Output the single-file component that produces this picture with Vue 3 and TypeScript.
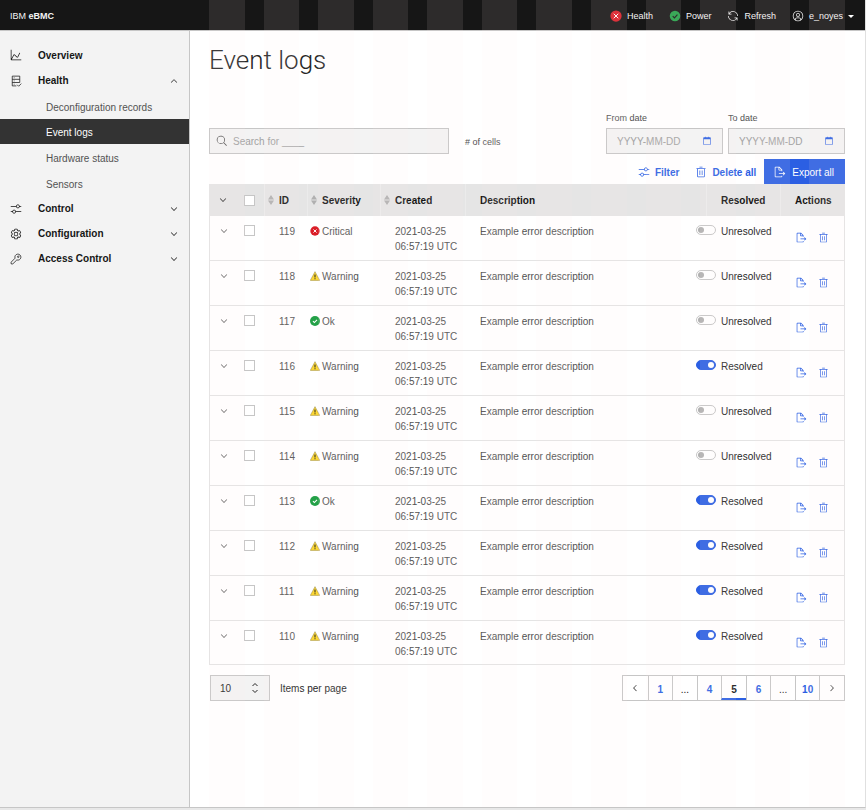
<script setup lang="ts">
import { ref } from 'vue'

type Severity = 'Critical' | 'Warning' | 'Ok'

interface LogEntry {
  id: number
  severity: Severity
  date: string
  time: string
  description: string
  resolved: boolean
  selected: boolean
}

const icons = {
  overview:
    'M4.67 28l6.39-12 7.3 6.49a2 2 0 001.7.47 2 2 0 001.42-1.07L27 10.9l-1.82-.9-5.49 11-7.3-6.49a2 2 0 00-1.68-.51 2 2 0 00-1.42 1L4 25V2H2v26a2 2 0 002 2h26v-2z',
  down: 'M16 22L6 12l1.4-1.4 8.6 8.6 8.6-8.6L26 12z',
  up: 'M16 10l10 10-1.4 1.4-8.6-8.6-8.6 8.6L6 20z',
  left: 'M10 16L20 6l1.4 1.4-8.6 8.6 8.6 8.6L20 26z',
  right: 'M22 16L12 26l-1.4-1.4 8.6-8.6-8.6-8.6L12 6z',
  search:
    'M29 27.59l-7.55-7.56a11.02 11.02 0 10-1.42 1.42L27.59 29zM4 13a9 9 0 119 9 9.01 9.01 0 01-9-9z',
  adjust:
    'M30 8h-4.1c-.5-2.3-2.5-4-4.9-4s-4.4 1.7-4.9 4H2v2h14.1c.5 2.3 2.5 4 4.9 4s4.4-1.7 4.9-4H30V8zM21 12c-1.7 0-3-1.3-3-3s1.3-3 3-3 3 1.3 3 3-1.3 3-3 3zM2 24h4.1c.5 2.3 2.5 4 4.9 4s4.4-1.7 4.9-4H30v-2H15.9c-.5-2.3-2.5-4-4.9-4s-4.4 1.7-4.9 4H2v2zM11 20c1.7 0 3 1.3 3 3s-1.3 3-3 3-3-1.3-3-3 1.3-3 3-3z',
  trash:
    'M12 12h2v12h-2zM18 12h2v12h-2zM4 6v2h2v20a2 2 0 002 2h16a2 2 0 002-2V8h2V6zM8 28V8h16v20zM12 2h8v2h-8z',
  export:
    'M13 21h13.17l-2.58 2.59L25 25l5-5-5-5-1.41 1.41L26.17 19H13zM22 14v-4a1 1 0 00-.29-.71l-7-7A1 1 0 0014 2H4a2 2 0 00-2 2v24a2 2 0 002 2h16a2 2 0 002-2v-2h-2v2H4V4h8v6a2 2 0 002 2h6v2zM14 10V4.41L19.59 10z',
  calendar:
    'M26 4h-4V2h-2v2h-8V2h-2v2H6c-1.1 0-2 .9-2 2v20c0 1.1.9 2 2 2h20c1.1 0 2-.9 2-2V6c0-1.1-.9-2-2-2zm0 22H6V10h20v16z',
  renew:
    'M12 10H6.78A11 11 0 0127 16h2A13 13 0 006 7.68V4H4v8h8zM20 22h5.22A11 11 0 015 16H3a13 13 0 0023 8.32V28h2v-8h-8z',
  user: 'M16 8a5 5 0 105 5 5 5 0 00-5-5zm0 8a3 3 0 113-3 3 3 0 01-3 3zM16 2a14 14 0 1014 14A14.016 14.016 0 0016 2zM10 26.377V25a3.003 3.003 0 013-3h6a3.003 3.003 0 013 3v1.377a11.899 11.899 0 01-12 0zm13.993-1.451A5.002 5.002 0 0019 20h-6a5.002 5.002 0 00-4.992 4.926 12 12 0 1115.985 0z',
  settings:
    'M27 16.76c0-.25 0-.5 0-.76s0-.51 0-.77l1.92-1.68A2 2 0 0029.3 11l-2.36-4a2 2 0 00-1.73-1 2 2 0 00-.64.1l-2.43.82a11.35 11.35 0 00-1.31-.75l-.51-2.52a2 2 0 00-2-1.61h-4.68a2 2 0 00-2 1.61l-.51 2.52a11.48 11.48 0 00-1.32.75L7.43 6.06A2 2 0 006.79 6a2 2 0 00-1.73 1L2.7 11a2 2 0 00.41 2.51L5 15.24c0 .25 0 .5 0 .76s0 .51 0 .77l-1.92 1.68A2 2 0 002.7 21l2.36 4a2 2 0 001.73 1 2 2 0 00.64-.1l2.43-.82a11.35 11.35 0 001.31.75l.51 2.52a2 2 0 002 1.61h4.72a2 2 0 002-1.61l.51-2.52a11.48 11.48 0 001.32-.75l2.42.82a2 2 0 00.64.1 2 2 0 001.73-1l2.28-4a2 2 0 00-.41-2.51zM25.21 24l-3.43-1.16a8.86 8.86 0 01-2.71 1.57L18.36 28h-4.72l-.71-3.55a9.36 9.36 0 01-2.7-1.57L6.79 24l-2.36-4 2.72-2.4a8.9 8.9 0 010-3.13L4.43 12l2.36-4 3.43 1.16a8.86 8.86 0 012.71-1.57L13.64 4h4.72l.71 3.55a9.36 9.36 0 012.7 1.57L25.21 8l2.36 4-2.72 2.4a8.9 8.9 0 010 3.13L27.57 20zM16 22a6 6 0 116-6 5.94 5.94 0 01-6 6zm0-10a3.91 3.91 0 00-4 4 3.91 3.91 0 004 4 3.91 3.91 0 004-4 3.91 3.91 0 00-4-4z',
}

const healthLinks = ['Deconfiguration records', 'Event logs', 'Hardware status', 'Sensors']
const currentLink = 'Event logs'

const makeEntry = (id: number, severity: Severity, resolved: boolean): LogEntry => ({
  id,
  severity,
  date: '2021-03-25',
  time: '06:57:19 UTC',
  description: 'Example error description',
  resolved,
  selected: false,
})

const logs = ref<LogEntry[]>([
  makeEntry(119, 'Critical', false),
  makeEntry(118, 'Warning', false),
  makeEntry(117, 'Ok', false),
  makeEntry(116, 'Warning', true),
  makeEntry(115, 'Warning', false),
  makeEntry(114, 'Warning', false),
  makeEntry(113, 'Ok', true),
  makeEntry(112, 'Warning', true),
  makeEntry(111, 'Warning', true),
  makeEntry(110, 'Warning', true),
])

const sortable = ['ID', 'Severity', 'Created']
const pages = ['1', '…', '4', '5', '6', '…', '10']
const currentPage = ref('5')
const pageSize = ref('10')
</script>

<template>
  <div class="page">
    <header class="topbar">
      <a class="brand" href="#">IBM <b>eBMC</b></a>
      <nav class="topnav" aria-label="System">
        <a href="#">
          <svg viewBox="0 0 32 32"><circle cx="16" cy="16" r="15" fill="#da1e28" /><path d="M10 10l12 12M22 10L10 22" stroke="#fff" stroke-width="2.6" /></svg>
          Health
        </a>
        <a href="#">
          <svg viewBox="0 0 32 32"><circle cx="16" cy="16" r="14" fill="#24a148" /><path d="M10 16.500l4.500 4.500 8-8.500" fill="none" stroke="#161616" stroke-width="3" /></svg>
          Power
        </a>
        <button type="button">
          <svg viewBox="0 0 32 32"><path :d="icons.renew" /></svg>
          Refresh
        </button>
        <button type="button">
          <svg viewBox="0 0 32 32"><path :d="icons.user" /></svg>
          e_noyes
          <i class="caret"></i>
        </button>
      </nav>
    </header>

    <div class="body">
      <nav class="sidebar" aria-label="Main">
        <a class="group" href="#">
          <svg viewBox="0 0 32 32"><path :d="icons.overview" /></svg><span>Overview</span>
        </a>
        <button class="group" type="button" aria-expanded="true">
          <svg viewBox="0 0 32 32" fill="none" stroke="currentColor" stroke-width="2">
            <path d="M26 20V3H6v26h11M6 11.500h20M6 20h20" />
            <path d="M10 7.300h2M10 15.800h2M10 24.500h2" />
            <path d="M19 26l4 4 7-7" />
          </svg>
          <span>Health</span>
          <svg class="chevron" viewBox="0 0 32 32"><path :d="icons.up" /></svg>
        </button>
        <ul>
          <li v-for="link in healthLinks" :key="link">
            <a href="#" :class="{ active: link === currentLink }">{{ link }}</a>
          </li>
        </ul>
        <button class="group" type="button">
          <svg viewBox="0 0 32 32"><path :d="icons.adjust" /></svg><span>Control</span>
          <svg class="chevron" viewBox="0 0 32 32"><path :d="icons.down" /></svg>
        </button>
        <button class="group" type="button">
          <svg viewBox="0 0 32 32"><path :d="icons.settings" /></svg><span>Configuration</span>
          <svg class="chevron" viewBox="0 0 32 32"><path :d="icons.down" /></svg>
        </button>
        <button class="group" type="button">
          <svg viewBox="0 0 32 32" fill="none" stroke="currentColor" stroke-width="2">
            <path d="M13.500 13.800L3 24.500V29h4.500L18.200 18.500A8 8 0 1013.500 13.800z" />
            <circle cx="22" cy="10" r="2" />
          </svg>
          <span>Access Control</span>
          <svg class="chevron" viewBox="0 0 32 32"><path :d="icons.down" /></svg>
        </button>
      </nav>

      <main>
        <h1>Event logs</h1>

        <div class="filters">
          <div class="field search">
            <svg viewBox="0 0 32 32"><path :d="icons.search" /></svg>
            <input type="search" placeholder="Search for ____" aria-label="Search logs" />
          </div>
          <span class="count"># of cells</span>
          <div class="date">
            <label for="from-date">From date</label>
            <div class="field">
              <input id="from-date" type="text" placeholder="YYYY-MM-DD" />
              <button type="button" aria-label="Pick from date"><svg viewBox="0 0 32 32"><path :d="icons.calendar" /></svg></button>
            </div>
          </div>
          <div class="date">
            <label for="to-date">To date</label>
            <div class="field">
              <input id="to-date" type="text" placeholder="YYYY-MM-DD" />
              <button type="button" aria-label="Pick to date"><svg viewBox="0 0 32 32"><path :d="icons.calendar" /></svg></button>
            </div>
          </div>
        </div>

        <div class="toolbar">
          <button type="button"><svg viewBox="0 0 32 32"><path :d="icons.adjust" /></svg>Filter</button>
          <button type="button"><svg viewBox="0 0 32 32"><path :d="icons.trash" /></svg>Delete all</button>
          <button class="primary" type="button"><svg viewBox="0 0 32 32"><path :d="icons.export" /></svg>Export all</button>
        </div>

        <table>
          <colgroup>
            <col class="c-expand" /><col class="c-check" /><col class="c-id" /><col class="c-severity" />
            <col class="c-created" /><col /><col class="c-resolved" /><col class="c-actions" />
          </colgroup>
          <thead>
            <tr>
              <th class="center">
                <button type="button" aria-label="Expand all"><svg class="chevron" viewBox="0 0 32 32"><path :d="icons.down" /></svg></button>
              </th>
              <th class="center select"><input class="check" type="checkbox" aria-label="Select all" /></th>
              <th v-for="name in sortable" :key="name" class="divided">
                <button class="sort" type="button">
                  <svg viewBox="0 0 6 10"><path d="M3 0l3 4.400H0zM3 10L0 5.600h6z" /></svg>{{ name }}
                </button>
              </th>
              <th class="divided text">Description</th>
              <th class="resolved"><span>Resolved</span></th>
              <th class="divided text">Actions</th>
            </tr>
          </thead>
          <tbody>
            <tr v-for="log in logs" :key="log.id">
              <td class="center">
                <button type="button" :aria-label="`Expand ${log.id}`"><svg class="chevron" viewBox="0 0 32 32"><path :d="icons.down" /></svg></button>
              </td>
              <td class="center select"><input v-model="log.selected" class="check" type="checkbox" :aria-label="`Select ${log.id}`" /></td>
              <td class="text">{{ log.id }}</td>
              <td>
                <span class="severity">
                  <svg v-if="log.severity === 'Critical'" viewBox="0 0 32 32"><circle cx="16" cy="16" r="15" fill="#da1e28" /><path d="M11 11l10 10M21 11L11 21" stroke="#fff" stroke-width="3" /></svg>
                  <svg v-else-if="log.severity === 'Ok'" viewBox="0 0 32 32"><circle cx="16" cy="16" r="16" fill="#24a148" /><path d="M9.500 16.500l4.500 4.500 8.500-8.500" fill="none" stroke="#fff" stroke-width="3.500" /></svg>
                  <svg v-else viewBox="0 0 32 32"><path d="M16 2L31 30H1z" fill="#fdd835" stroke="#8a7a3a" stroke-width="1.500" stroke-linejoin="round" /><path d="M14.500 11h3v10h-3zM14.500 23.500h3v3h-3z" fill="#161616" /></svg>
                  {{ log.severity }}
                </span>
              </td>
              <td class="text">{{ log.date }}<br />{{ log.time }}</td>
              <td class="text">{{ log.description }}</td>
              <td>
                <label class="switch"><input v-model="log.resolved" type="checkbox" role="switch" />{{ log.resolved ? 'Resolved' : 'Unresolved' }}</label>
              </td>
              <td>
                <div class="actions">
                  <button type="button" :aria-label="`Export ${log.id}`"><svg viewBox="0 0 32 32"><path :d="icons.export" /></svg></button>
                  <button type="button" :aria-label="`Delete ${log.id}`"><svg viewBox="0 0 32 32"><path :d="icons.trash" /></svg></button>
                </div>
              </td>
            </tr>
          </tbody>
        </table>

        <footer>
          <div class="size">
            <select id="page-size" v-model="pageSize">
              <option>10</option>
              <option>20</option>
              <option>50</option>
            </select>
            <svg viewBox="0 0 10 12"><path d="M2.500 4l2.500-2.500L7.500 4M2.500 8l2.500 2.500L7.500 8" fill="none" stroke="currentColor" /></svg>
          </div>
          <label for="page-size">Items per page</label>
          <nav class="pager" aria-label="Pagination">
            <button type="button" aria-label="Previous page"><svg viewBox="0 0 32 32"><path :d="icons.left" /></svg></button>
            <template v-for="(page, i) in pages" :key="i">
              <span v-if="page === '…'">...</span>
              <button v-else type="button" :class="{ current: page === currentPage }" @click="currentPage = page">{{ page }}</button>
            </template>
            <button type="button" aria-label="Next page"><svg viewBox="0 0 32 32"><path :d="icons.right" /></svg></button>
          </nav>
        </footer>
      </main>
    </div>

    <div class="columns" aria-hidden="true"><i v-for="n in 12" :key="n"></i></div>
  </div>
</template>

<style>
body {
  background: #e8e8e8;
}
</style>

<style scoped>
.page,
.page * {
  box-sizing: border-box;
}
.page {
  position: relative;
  display: flex;
  flex-direction: column;
  min-height: calc(100vh - 2px);
  border-right: 1px solid #e0e0e0;
  border-bottom: 1px solid #c6c6c6;
  background: #fff;
  color: #525252;
  font: 10px/15px "Liberation Sans", Arial, sans-serif;
}
svg {
  flex: none;
  width: 12px;
  height: 12px;
  fill: currentColor;
  fill-rule: evenodd;
}
svg[fill='none'] {
  fill: none;
}
a {
  color: inherit;
  text-decoration: none;
}
button,
input,
select {
  margin: 0;
  padding: 0;
  border: 0;
  border-radius: 0;
  background: none;
  color: inherit;
  font: inherit;
  outline: none;
}
button svg {
  display: block;
}
.chevron {
  width: 10px;
  height: 10px;
}

.columns {
  position: absolute;
  inset: 0 20px 0 209px;
  display: grid;
  grid-template-columns: repeat(12, 1fr);
  column-gap: 19px;
  pointer-events: none;
}
.columns i {
  background: rgba(255, 235, 235, 0.1);
}

.topbar {
  display: flex;
  justify-content: space-between;
  align-items: center;
  height: 31px;
  padding: 2px 11px 0 10px;
  border-bottom: 1px solid #c6c6c6;
  background: #161616;
  color: #f4f4f4;
  font-size: 9px;
}
.topnav {
  display: flex;
  gap: 16px;
}
.topnav a,
.topnav button {
  display: flex;
  align-items: center;
  gap: 5px;
}
.caret {
  border: 3px solid transparent;
  border-top-color: #fff;
  border-bottom-width: 0;
}

.body {
  display: flex;
  flex: 1;
}
.sidebar {
  display: flex;
  flex: none;
  flex-direction: column;
  width: 190px;
  padding-top: 11px;
  border-right: 1px solid #c6c6c6;
  background: #f3f3f3;
}
.group {
  display: flex;
  align-items: center;
  gap: 16px;
  height: 25px;
  padding: 0 10px;
  color: #161616;
  font-weight: bold;
  text-align: left;
}
a.group {
  height: 26px;
}
.group span {
  flex: 1;
}
ul {
  margin: 0;
  padding: 0;
  list-style: none;
}
li a {
  display: flex;
  align-items: center;
  height: 26px;
  padding: 2px 0 0 46px;
}
li a.active {
  height: 25px;
  background: #333;
  color: #fff;
}

main {
  flex: 1;
  min-width: 0;
  padding: 13px 20px 20px 19px;
}
h1 {
  margin: 0 0 36px;
  color: #262626;
  font: 300 26px/32px Roboto, "Liberation Sans", sans-serif;
}
.filters {
  display: flex;
  align-items: flex-end;
  gap: 5px;
}
.field {
  display: flex;
  align-items: center;
  height: 26px;
  border: 1px solid #c6c6c6;
  background: #f3f3f3;
}
.field input {
  flex: 1;
  min-width: 0;
}
.field input::placeholder {
  color: #a2a2a2;
  opacity: 1;
}
.search {
  width: 240px;
  gap: 5px;
  padding: 0 6px;
}
.count {
  flex: 1;
  padding: 0 0 4px 11px;
  font-size: 9px;
}
.date label {
  display: block;
  margin-bottom: 4px;
  font-size: 9px;
  line-height: 12px;
}
.date .field {
  width: 117px;
  padding: 0 10px;
}
.date button,
.actions,
.toolbar {
  color: #2b5fe3;
}
.date svg {
  width: 10px;
  height: 10px;
}
.toolbar {
  display: flex;
  justify-content: flex-end;
  margin-top: 5px;
  gap: 8px;
}
.toolbar button {
  display: flex;
  align-items: center;
  gap: 5px;
  height: 25px;
  padding: 1px 8px 0 0;
  font-weight: bold;
}
.toolbar button + button {
  padding-right: 0;
}
.toolbar button.primary {
  gap: 6px;
  padding: 1px 11px 0 10px;
  background: #2b5fe3;
  color: #fff;
  font-weight: normal;
}

table {
  width: 100%;
  table-layout: fixed;
  border-spacing: 0;
}
.c-expand { width: 28px; }
.c-check { width: 27px; }
.c-id { width: 43px; }
.c-severity { width: 73px; }
.c-created { width: 85px; }
.c-resolved { width: 89px; }
.c-actions { width: 65px; }
th {
  height: 32px;
  padding: 0;
  background: #e5e5e5;
  color: #161616;
  text-align: left;
  vertical-align: middle;
}
th.divided {
  border-left: 1px solid #ebebeb;
}
th.text {
  padding-left: 14px;
}
th.resolved span {
  display: block;
  margin-left: 15px;
  padding: 1px 0 0 14px;
  border-left: 1px solid #ebebeb;
  line-height: 31px;
}
.sort {
  display: flex;
  align-items: center;
  gap: 5px;
  padding-left: 3px;
  font-weight: bold;
}
.sort svg {
  width: 6px;
  height: 10px;
  color: #b0b0b0;
}
td {
  height: 45px;
  padding: 8px 0 6px;
  border-bottom: 1px solid #e4e4e4;
  vertical-align: top;
}
td:first-child {
  border-left: 1px solid #e4e4e4;
}
td:last-child {
  border-right: 1px solid #e4e4e4;
}
tr:last-child td {
  height: 44px;
  padding-bottom: 5px;
}
td.text {
  padding-left: 15px;
}
.center > * {
  display: block;
  margin: 0 auto;
}
.center.select {
  padding-right: 2px;
}
td.center > button {
  height: 13px;
}
td .check {
  margin-top: 1px;
}
.check {
  width: 11px;
  height: 11px;
  border: 1px solid #c6c6c6;
  background: #fff;
  appearance: none;
}
.check:checked {
  background: #2b5fe3;
}
.severity {
  display: flex;
  align-items: center;
  gap: 2px;
  padding-left: 3px;
}
.severity svg {
  width: 10px;
  height: 10px;
  margin-bottom: 2px;
}
.switch {
  display: flex;
  align-items: center;
  gap: 5px;
  height: 14px;
  padding-left: 5px;
  color: #262626;
}
.switch input {
  display: flex;
  align-items: center;
  width: 20px;
  height: 10px;
  margin-bottom: 2px;
  padding: 0 1px;
  border: 1px solid #c6c6c6;
  border-radius: 5px;
  background: #fff;
  appearance: none;
}
.switch input::before {
  content: '';
  width: 6px;
  height: 6px;
  border-radius: 50%;
  background: #b0b0b0;
}
.switch input:checked {
  justify-content: flex-end;
  border-color: #2b5fe3;
  background: #2b5fe3;
}
.switch input:checked::before {
  background: #fff;
}
.actions {
  display: flex;
  gap: 11px;
  padding: 8px 0 0 16px;
}
.actions svg {
  width: 11px;
  height: 11px;
}

footer {
  display: flex;
  align-items: center;
  margin-top: 10px;
  color: #262626;
}
.size {
  display: grid;
  align-items: center;
  width: 60px;
  height: 26px;
  margin: 0 10px 0 1px;
  border: 1px solid #c6c6c6;
  background: #f3f3f3;
}
.size > * {
  grid-area: 1 / 1;
}
.size select {
  height: 24px;
  padding-left: 9px;
  appearance: none;
}
.size svg {
  justify-self: end;
  width: 10px;
  margin-right: 9px;
  pointer-events: none;
}
.pager {
  display: grid;
  grid-template-columns: repeat(9, 1fr);
  width: 223px;
  height: 26px;
  margin-left: auto;
  border: 1px solid #c6c6c6;
}
.pager > * {
  display: grid;
  place-items: center;
  padding-top: 2px;
  color: #2b5fe3;
  font-weight: bold;
}
.pager > * + * {
  border-left: 1px solid #c6c6c6;
}
.pager span,
.pager button:first-child,
.pager button:last-child {
  color: #161616;
  font-weight: normal;
}
.pager .current {
  padding-top: 4px;
  border-bottom: 2px solid #2b5fe3;
  color: #161616;
}
.pager svg {
  width: 10px;
  height: 10px;
  margin-bottom: 2px;
}
</style>
